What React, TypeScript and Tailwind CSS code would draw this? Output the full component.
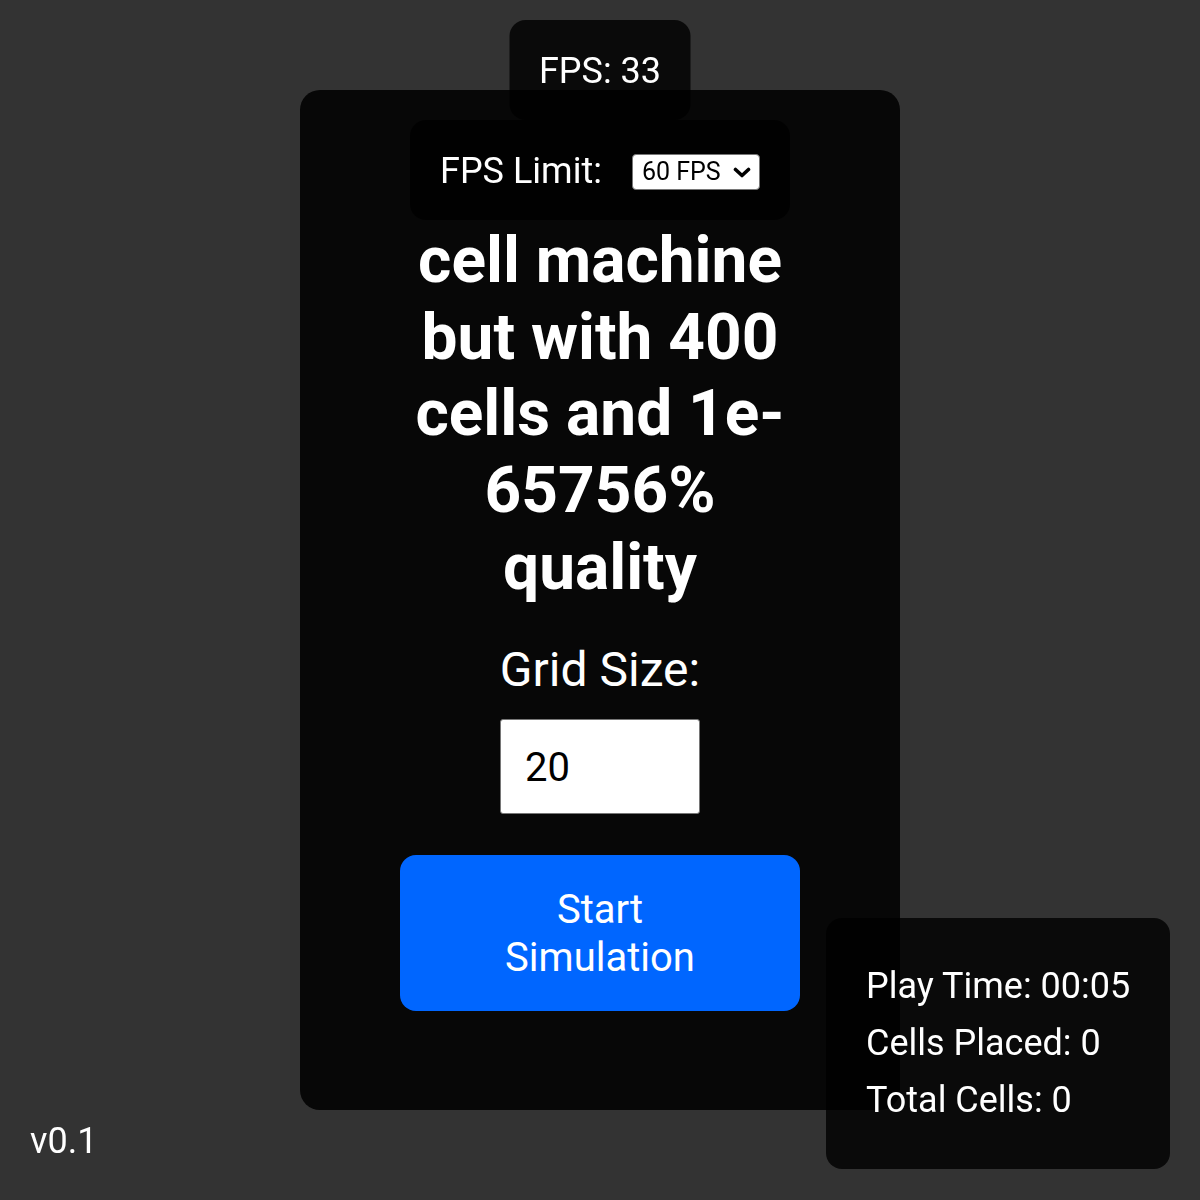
import { useState } from 'react';

function FpsCounter() {
  return (
    <div className="fixed left-1/2 top-[20px] flex h-[100px] w-[181px] -translate-x-1/2 items-center justify-center rounded-[16px] bg-black/80 pt-[3px] text-[36px] leading-[43px] text-white">
      FPS: 33
    </div>
  );
}

function FpsLimit() {
  const [limit, setLimit] = useState('60');

  return (
    <div className="fixed left-1/2 top-[120px] flex h-[100px] w-[380px] -translate-x-1/2 items-center gap-[30px] rounded-[16px] bg-black/80 pl-[30px] pt-[3px] text-white">
      <label className="text-[36px] leading-[43px]">FPS Limit:</label>
      <div className="relative">
        <select
          value={limit}
          onChange={(e) => setLimit(e.target.value)}
          className="h-[36px] w-[128px] appearance-none rounded-[4px] border border-[#767676] bg-white pl-[9px] text-[25px] leading-[30px] text-black"
        >
          <option value="30">30 FPS</option>
          <option value="60">60 FPS</option>
          <option value="120">120 FPS</option>
        </select>
        <svg
          className="pointer-events-none absolute right-[9px] top-[13px] h-[11px] w-[18px]"
          viewBox="0 0 18 11"
          fill="none"
          stroke="black"
          strokeWidth="3.6"
          strokeLinecap="round"
          strokeLinejoin="round"
        >
          <path d="M2.5 2.5 9 8.5 15.5 2.5" />
        </svg>
      </div>
    </div>
  );
}

function Stats() {
  return (
    <div className="fixed bottom-[31px] right-[30px] w-[344px] whitespace-nowrap rounded-[16px] bg-black/80 p-10 text-[36px] leading-[57px] text-white">
      <p>Play Time: 00:05</p>
      <p>Cells Placed: 0</p>
      <p>Total Cells: 0</p>
    </div>
  );
}

export default function App() {
  const [gridSize, setGridSize] = useState('20');

  return (
    <div className="flex min-h-screen items-center justify-center bg-[#333333] font-['Roboto',sans-serif]">
      <div className="flex w-[600px] flex-col items-center rounded-[20px] bg-[#070707] px-[100px] pb-[99px] pt-[133px] text-white">
        <h1 className="w-[400px] text-center text-[64px] font-bold leading-[1.2]">
          cell machine but with 400 cells and 1e-65756% quality
        </h1>

        <label className="mt-[34px] text-[48px] leading-[1.2]">Grid Size:</label>

        <input
          type="number"
          value={gridSize}
          onChange={(e) => setGridSize(e.target.value)}
          className="mt-[21px] h-[95px] w-[200px] rounded-[3px] border border-[#767676] bg-white px-6 pt-[2px] text-[40px] text-black [appearance:textfield]"
        />

        <button className="mt-[41px] h-[156px] w-[400px] rounded-[16px] bg-[#0066ff] px-[100px] pt-[2px] text-[40px] leading-[1.2] text-white">
          Start Simulation
        </button>
      </div>

      <FpsCounter />
      <FpsLimit />
      <Stats />

      <div className="fixed bottom-[37px] left-[30px] text-[36px] leading-[43px] text-white">v0.1</div>
    </div>
  );
}
